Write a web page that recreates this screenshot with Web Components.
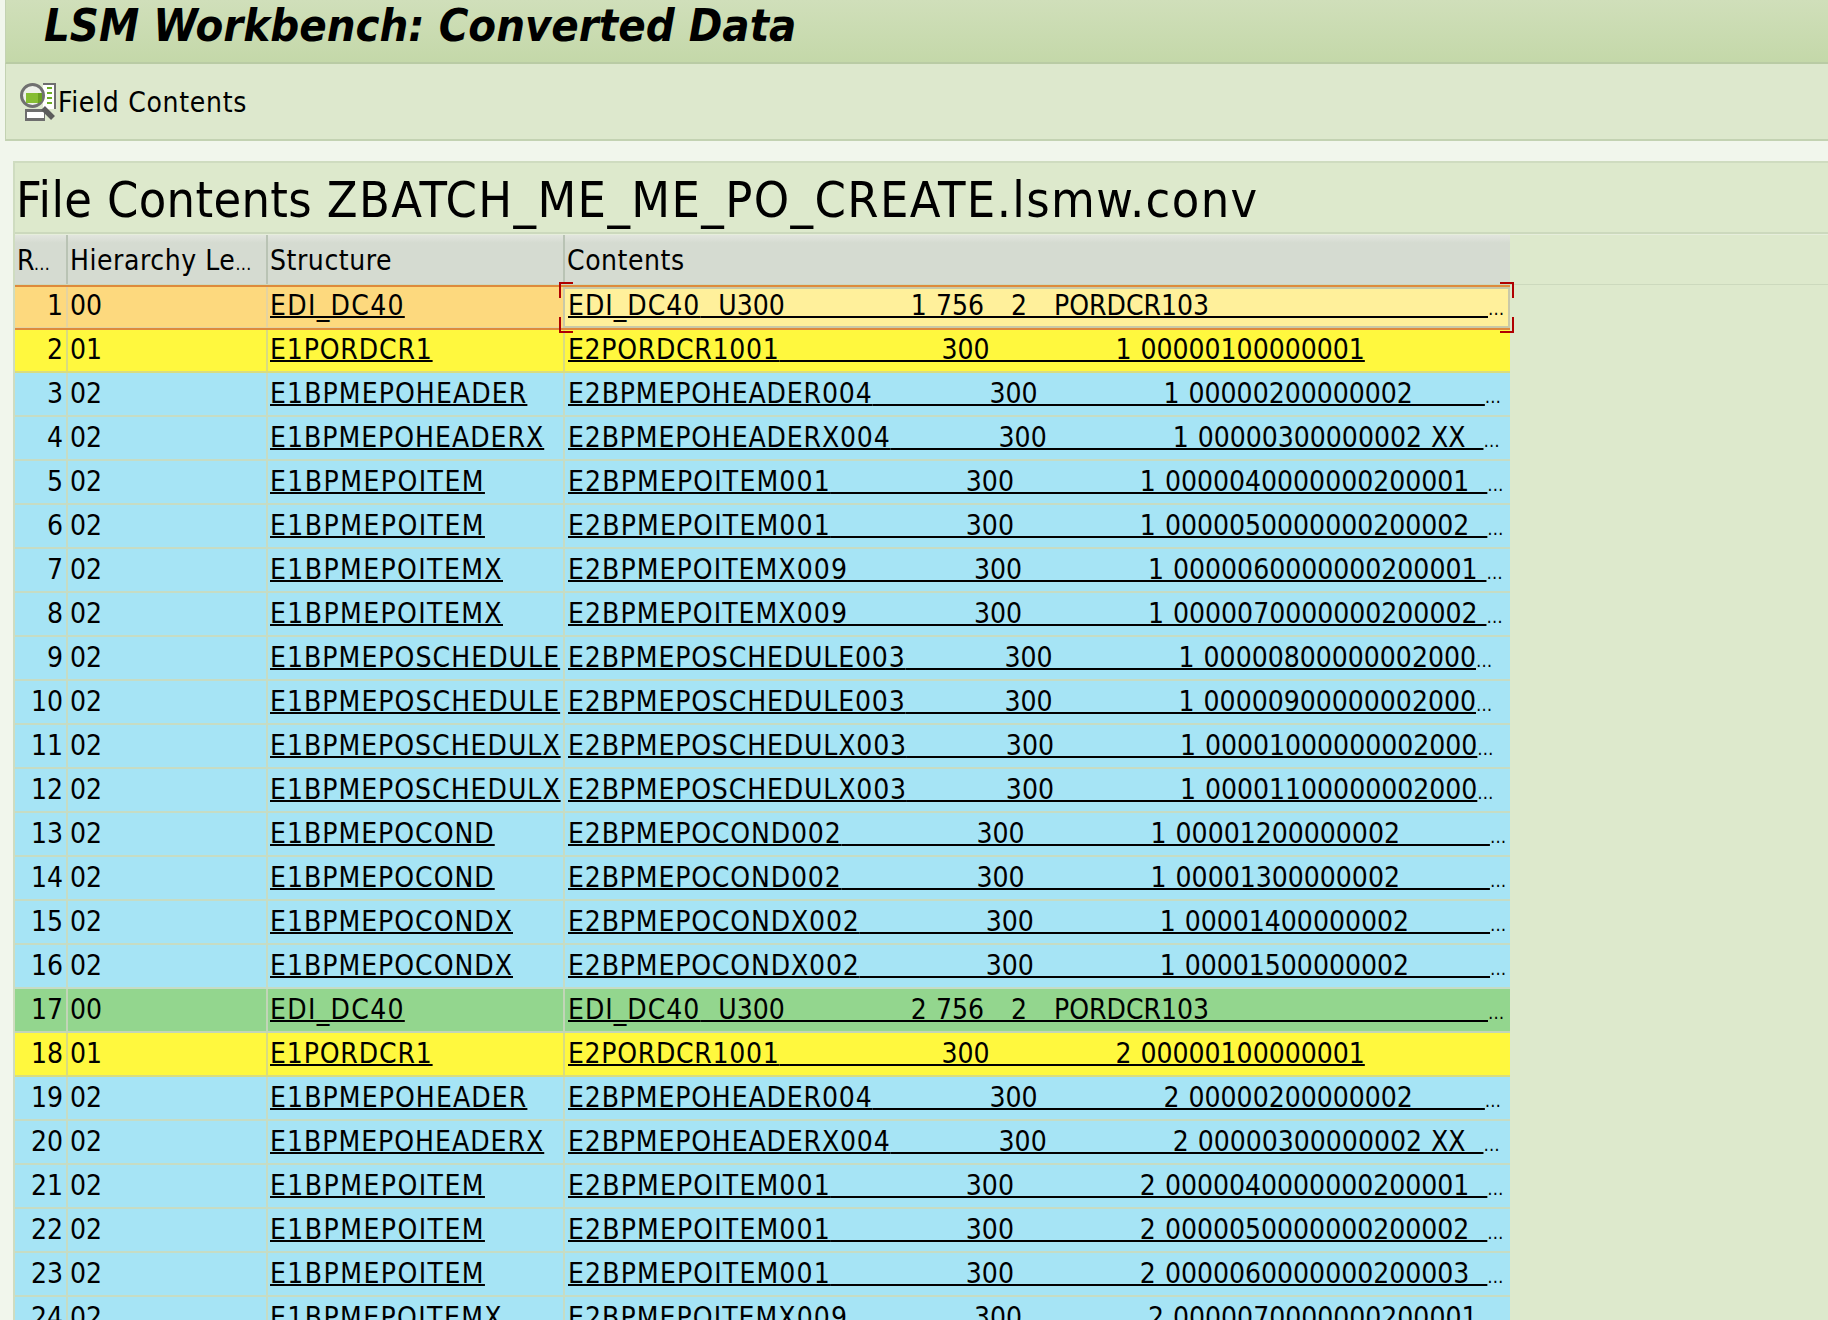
<!DOCTYPE html>
<html>
<head>
<meta charset="utf-8">
<title>LSM Workbench: Converted Data</title>
<style>
  html, body { margin: 0; height: 100%; overflow: hidden; background: #f1f6ec; }
  body { font-family: "DejaVu Sans Condensed", "DejaVu Sans", sans-serif; font-stretch: condensed; color: #000; }
</style>
</head>
<body>
<sap-title-bar>LSM Workbench: Converted Data</sap-title-bar>
<sap-toolbar><sap-tool-button>Field Contents</sap-tool-button></sap-toolbar>
<sap-panel heading="File Contents " object="ZBATCH_ME_ME_PO_CREATE.lsmw.conv">
  <alv-grid></alv-grid>
</sap-panel>

<script>
class SapTitleBar extends HTMLElement {
  constructor() {
    super();
    this.attachShadow({ mode: "open" }).innerHTML = `
      <style>
        :host {
          display: block;
          box-sizing: border-box;
          height: 64px;
          margin-left: 5px;
          padding-left: 38px;
          border-left: 1px solid #c3d2b2;
          border-bottom: 2px solid #b9cba4;
          background: linear-gradient(#d0dfba, #c4d8a9);
          font-size: 45px;
          font-weight: bold;
          font-style: italic;
          line-height: 51px;
          white-space: nowrap;
        }
      </style>
      <slot></slot>
    `;
  }
}

class SapToolbar extends HTMLElement {
  constructor() {
    super();
    this.attachShadow({ mode: "open" }).innerHTML = `
      <style>
        :host {
          display: flex;
          align-items: center;
          box-sizing: border-box;
          height: 77px;
          margin-left: 5px;
          padding-left: 14px;
          border-left: 1px solid #c3d2b2;
          border-bottom: 2px solid #c3d2b2;
          background: #dde8cd;
        }
      </style>
      <slot></slot>
    `;
  }
}

class SapToolButton extends HTMLElement {
  constructor() {
    super();
    this.attachShadow({ mode: "open" }).innerHTML = `
      <style>
        :host {
          display: inline-flex;
          align-items: center;
          font-size: 28px;
          letter-spacing: .7px;
        }
        svg { display: block; width: 36px; height: 38px; margin-right: 2px; }
        span { display: block; padding-top: 2px; }
      </style>
      <svg viewBox="0 0 36 38">
        <path d="M23 0h13v26h-2v-24h-11z" fill="#6e6e6e"/>
        <path d="M23 2h11v24h-11z" fill="#fff"/>
        <path d="M27 4h5v2h-5zM27 9h5v2h-5zM27 14h5v2h-5zM27 19h5v2h-5z" fill="#6fae28"/>
        <path d="M5 26h20v12h-20z" fill="#6e6e6e"/>
        <path d="M7 29h17v6h-17z" fill="#fff"/>
        <circle cx="12.5" cy="12.5" r="11" fill="#eef1ea" stroke="#707070" stroke-width="3"/>
        <path d="M6 10h12v10h-12z" fill="#86bd33"/>
        <path d="M18 10h4v8l-3 2h-1z" fill="#6aa022"/>
        <path d="M23 25l10 10" stroke="#5c5c5c" stroke-width="5.5" fill="none"/>
      </svg>
      <span><slot></slot></span>
    `;
  }
}

class SapPanel extends HTMLElement {
  static get observedAttributes() {
    return ["heading", "object"];
  }

  constructor() {
    super();
    this.attachShadow({ mode: "open" }).innerHTML = `
      <style>
        :host {
          display: block;
          margin: 20px 0 0 13px;
          border-top: 2px solid #cfdcc0;
          border-left: 2px solid #cfdcc0;
          background: #dde9cc;
        }
        h1 {
          box-sizing: border-box;
          height: 71px;
          margin: 0;
          padding: 8px 0 0 1px;
          border-bottom: 2px solid #ccd9bd;
          font-size: 50px;
          font-weight: normal;
          letter-spacing: 1.4px;
          line-height: 58px;
          white-space: pre;
        }
        .heading { letter-spacing: .35px; }
        .gap { height: 1px; background: #e6eedb; }
      </style>
      <h1><span class="heading"></span><span class="object"></span></h1>
      <div class="gap"></div>
      <slot></slot>
    `;
  }

  attributeChangedCallback(name, oldValue, newValue) {
    this.shadowRoot.querySelector("." + name).textContent = newValue;
  }
}

class AlvRow extends HTMLElement {
  constructor() {
    super();
    this.attachShadow({ mode: "open" }).innerHTML = `
      <style>
        :host {
          display: grid;
          grid-template-columns: 53px 200px 297px 945px;
          box-sizing: border-box;
          width: 1495px;
          height: 44px;
          --bg: #a6e4f5;
          --line: #c6dcc4;
          background: var(--bg);
          font-size: 28px;
          line-height: 41px;
          word-spacing: 1px;
        }
        :host([kind="top"]) { --bg: #fdd97e; --line: #e5d3a0; }
        :host([kind="yellow"]) { --bg: #fff83e; --line: #d9dc80; }
        :host([kind="green"]) { --bg: #93d68e; --line: #c2d5b8; }
        :host([kind="top"]) .contents { background: #fff09b; }
        div {
          box-sizing: border-box;
          min-width: 0;
          padding: 0 6px 0 2px;
          border-right: 2px solid var(--line);
          border-bottom: 2px solid var(--line);
          overflow: hidden;
          white-space: pre;
        }
        .num { text-align: right; padding: 0 3px 0 0; }
        /* the ellipsis takes the cell's font, the text keeps the span's */
        .link { font-size: 18px; text-overflow: ellipsis; padding-right: 0; }
        .link > span {
          font-size: 28px;
          text-decoration: underline;
          text-decoration-thickness: 2px;
        }
        .contents { border-right: 0; padding: 0 3px 0 3px; }
      </style>
      <div class="num"></div>
      <div class="level"></div>
      <div class="link"><span class="structure"></span></div>
      <div class="link contents"><span><span class="segment"></span><span class="rest"></span></span></div>
    `;
  }

  set data(row) {
    const root = this.shadowRoot;
    root.querySelector(".num").textContent = row.no;
    root.querySelector(".level").textContent = row.level;
    const structure = root.querySelector(".structure");
    structure.textContent = row.structure;
    structure.style.letterSpacing = row.structureSpacing + "px";
    const segment = root.querySelector(".segment");
    segment.textContent = row.name;
    segment.style.letterSpacing = row.nameSpacing + "px";
    root.querySelector(".rest").textContent = row.rest;
  }
}

class AlvFocus extends HTMLElement {
  constructor() {
    super();
    this.attachShadow({ mode: "open" }).innerHTML = `
      <style>
        :host {
          position: absolute;
          left: 548px;
          top: 2px;
          width: 947px;
          height: 41px;
          z-index: 1;
          box-sizing: border-box;
          border: 2px solid #c9c9a8;
          pointer-events: none;
        }
        i {
          position: absolute;
          width: 12px;
          height: 14px;
          border: 0 solid #b00000;
        }
        .tl { left: -6px; top: -7px; border-width: 2px 0 0 2px; }
        .tr { right: -6px; top: -7px; border-width: 2px 2px 0 0; }
        .bl { left: -6px; bottom: -7px; border-width: 0 0 2px 2px; }
        .br { right: -6px; bottom: -7px; border-width: 0 2px 2px 0; }
      </style>
      <i class="tl"></i><i class="tr"></i><i class="bl"></i><i class="br"></i>
    `;
  }
}

class AlvGrid extends HTMLElement {
  constructor() {
    super();
    this.attachShadow({ mode: "open" }).innerHTML = `
      <style>
        :host { display: block; }
        .head-line { border-bottom: 1px solid #ccd9bd; height: 49px; }
        .head {
          display: grid;
          grid-template-columns: 53px 200px 297px 945px;
          width: 1495px;
          height: 49px;
          background: linear-gradient(#e2e5de 0, #d5dbd1 8px);
          line-height: 52px;
        }
        .head div {
          box-sizing: border-box;
          min-width: 0;
          padding: 0 3px 0 2px;
          border-right: 2px solid #b9c3b4;
          font-size: 18px;
          overflow: hidden;
          white-space: nowrap;
          text-overflow: ellipsis;
        }
        .head span { font-size: 28px; letter-spacing: .55px; }
        .head div:last-child { border-right: 0; }
        .rows { position: relative; width: 1495px; }
        .rows::before {
          content: "";
          position: absolute;
          left: 0; right: 0; top: 0; height: 45px;
          z-index: 1;
          border-top: 2px solid #de8a3c;
          border-bottom: 2px solid #de8a3c;
          box-sizing: border-box;
          pointer-events: none;
        }
      </style>
      <div class="head-line"><div class="head">
        <div><span>Row No.</span></div><div><span>Hierarchy Level</span></div><div><span>Structure</span></div><div><span>Contents</span></div>
      </div></div>
      <div class="rows"><alv-focus></alv-focus><slot></slot></div>
    `;
  }

  set rows(list) {
    list.forEach((row, index) => {
      const el = document.createElement("alv-row");
      if (row.kind) el.setAttribute("kind", row.kind);
      el.data = { ...row, no: index + 1 };
      this.appendChild(el);
    });
  }
}

customElements.define("sap-title-bar", SapTitleBar);
customElements.define("sap-toolbar", SapToolbar);
customElements.define("sap-tool-button", SapToolButton);
customElements.define("sap-panel", SapPanel);
customElements.define("alv-focus", AlvFocus);
customElements.define("alv-row", AlvRow);
customElements.define("alv-grid", AlvGrid);

const GAP = " ".repeat(14);
const TAIL = " ".repeat(90);

// structure, segment, letter spacing of each: the fallback font is narrower on I and M than the original
const PORD = ["E1PORDCR1", "E2PORDCR1001", .85, .7];
const HEADER = ["E1BPMEPOHEADER", "E2BPMEPOHEADER004", 1.1, .85];
const HEADERX = ["E1BPMEPOHEADERX", "E2BPMEPOHEADERX004", 1, .85];
const ITEM = ["E1BPMEPOITEM", "E2BPMEPOITEM001", 1.45, 1.15];
const ITEMX = ["E1BPMEPOITEMX", "E2BPMEPOITEMX009", 1.4, 1.07];
const SCHED = ["E1BPMEPOSCHEDULE", "E2BPMEPOSCHEDULE003", 1.05, .85];
const SCHEDX = ["E1BPMEPOSCHEDULX", "E2BPMEPOSCHEDULX003", 1, .85];
const COND = ["E1BPMEPOCOND", "E2BPMEPOCOND002", 1, .85];
const CONDX = ["E1BPMEPOCONDX", "E2BPMEPOCONDX002", 1, .85];

// the segment name sits in a fixed 30 char field
const seg = ([structure, name, structureSpacing, nameSpacing], level, batch, id, tail) => ({
  level,
  structure,
  name,
  structureSpacing,
  nameSpacing,
  rest: " ".repeat(30 - name.length) + "300" + GAP + batch + " " + id + tail,
});
const control = (kind, batch) => ({
  kind,
  level: "00",
  structure: "EDI_DC40",
  name: "EDI_DC40",
  structureSpacing: 1.3,
  nameSpacing: 1,
  rest: "  U300" + GAP + batch + " 756   2   PORDCR103" + TAIL,
});
const blue = (batch, list) => list.map(([group, id]) => seg(group, "02", batch, id, TAIL));

document.querySelector("alv-grid").rows = [
  control("top", "1"),
  { kind: "yellow", ...seg(PORD, "01", "1", "00000100000001", "") },
  ...blue("1", [
    [HEADER, "00000200000002"],
    [HEADERX, "00000300000002 XX"],
    [ITEM, "0000040000000200001"],
    [ITEM, "0000050000000200002"],
    [ITEMX, "0000060000000200001"],
    [ITEMX, "0000070000000200002"],
    [SCHED, "0000080000000200001"],
    [SCHED, "0000090000000200002"],
    [SCHEDX, "0000100000000200001"],
    [SCHEDX, "0000110000000200002"],
    [COND, "00001200000002"],
    [COND, "00001300000002"],
    [CONDX, "00001400000002"],
    [CONDX, "00001500000002"],
  ]),
  control("green", "2"),
  { kind: "yellow", ...seg(PORD, "01", "2", "00000100000001", "") },
  ...blue("2", [
    [HEADER, "00000200000002"],
    [HEADERX, "00000300000002 XX"],
    [ITEM, "0000040000000200001"],
    [ITEM, "0000050000000200002"],
    [ITEM, "0000060000000200003"],
    [ITEMX, "0000070000000200001"],
  ]),
];
</script>
</body>
</html>
